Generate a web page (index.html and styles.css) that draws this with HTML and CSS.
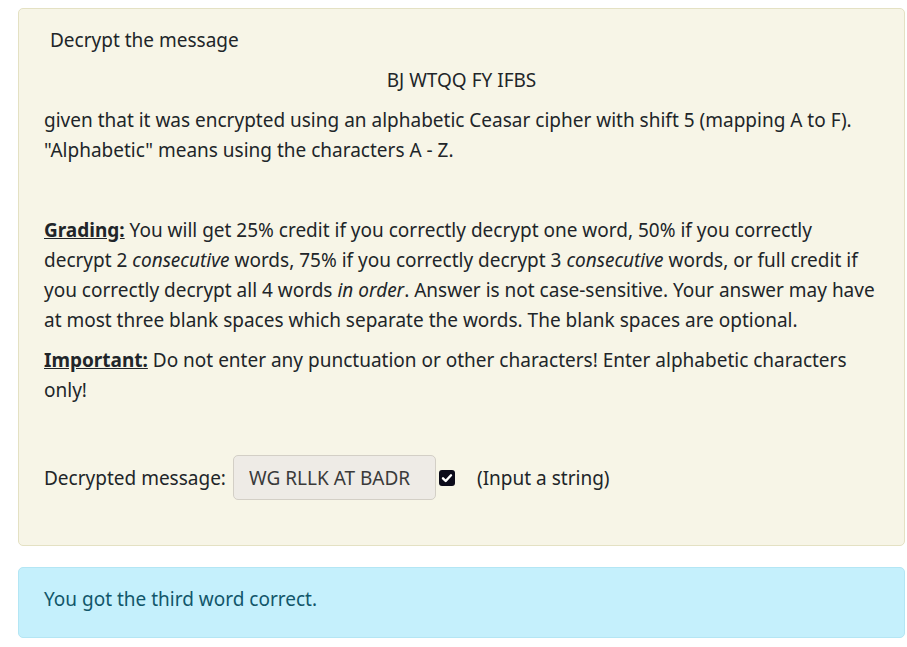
FILE: index.html
```html
<!DOCTYPE html>
<html lang="en">

<head>
   <meta charset="UTF-8">
   <meta name="viewport" content="width=device-width, initial-scale=1.0">
   <title>Decrypt the message</title>

   <link rel="stylesheet" href="styles.css">
</head>

<body>
   <div class="problem">
      <div class="problem__prompt">Decrypt the message</div>
      <div class="problem__cipher">BJ WTQQ FY IFBS</div>
      <p class="problem__text">
         given that it was encrypted using an alphabetic Ceasar cipher with shift 5 (mapping A to F).
         "Alphabetic" means using the characters A - Z.
      </p>

      <p class="problem__text problem__text--grading">
         <b class="label">Grading:</b> You will get 25% credit if you correctly decrypt one word, 50% if you correctly
         decrypt 2 <i>consecutive</i> words, 75% if you correctly decrypt 3 <i>consecutive</i> words, or full credit if
         you correctly decrypt all 4 words <i>in order</i>. Answer is not case-sensitive. Your answer may have
         at most three blank spaces which separate the words. The blank spaces are optional.
      </p>
      <p class="problem__text">
         <b class="label">Important:</b> Do not enter any punctuation or other characters! Enter alphabetic characters
         only!
      </p>

      <div class="answer">
         <label class="answer__label" for="answer">Decrypted message:</label>
         <input class="answer__input" id="answer" type="text" value="WG RLLK AT BADR">
         <span class="answer__check">
            <svg width="16" height="16" viewBox="0 0 16 16">
               <rect x="0" y="0" width="16" height="16" rx="3" fill="#0b0b1a" />
               <path d="M4 8.3 L6.7 11 L12 5.3" fill="none" stroke="#fff" stroke-width="2.4"
                  stroke-linecap="round" stroke-linejoin="round" />
            </svg>
         </span>
         <span class="answer__hint">(Input a string)</span>
      </div>
   </div>

   <div class="feedback">You got the third word correct.</div>
</body>

</html>
```

FILE: styles.css
```css
* {
   font-family: "Noto Sans", "Open Sans", sans-serif;
   box-sizing: border-box;
   padding: 0;
   margin: 0;
}

body {
   background-color: #fff;
   color: #212529;
   font-size: 19px;
   line-height: 30px;
   padding: 8px 2px 8px 18px;
}

.problem {
   background-color: #f7f5e7;
   border: 1px solid #e4e1c3;
   border-radius: 5px;
   padding: 16px 25px 45px;
}

.problem__prompt {
   padding-left: 6px;
}

.problem__cipher {
   margin-top: 10px;
   text-align: center;
}

.problem__text {
   margin-top: 10px;
}

.problem__text--grading {
   margin-top: 50px;
}

.label {
   text-decoration: underline;
   font-weight: 700;
}

.answer {
   margin-top: 50px;
   display: flex;
   align-items: center;
   height: 45px;
}

.answer__label {
   margin-right: 7px;
}

.answer__input {
   width: 203px;
   height: 45px;
   padding: 0 15px;
   font-size: 19px;
   color: #3a3a3a;
   background-color: #eeebe6;
   border: 1px solid #d3cfc6;
   border-radius: 5px;
   outline: none;
}

.answer__check {
   display: flex;
   margin-left: 3px;
   margin-right: 22px;
}

.feedback {
   margin-top: 21px;
   background-color: #c5f0fc;
   border: 1px solid #b4e6f4;
   border-radius: 5px;
   color: #11566a;
   padding: 16px 25px;
   height: 71px;
}
```
